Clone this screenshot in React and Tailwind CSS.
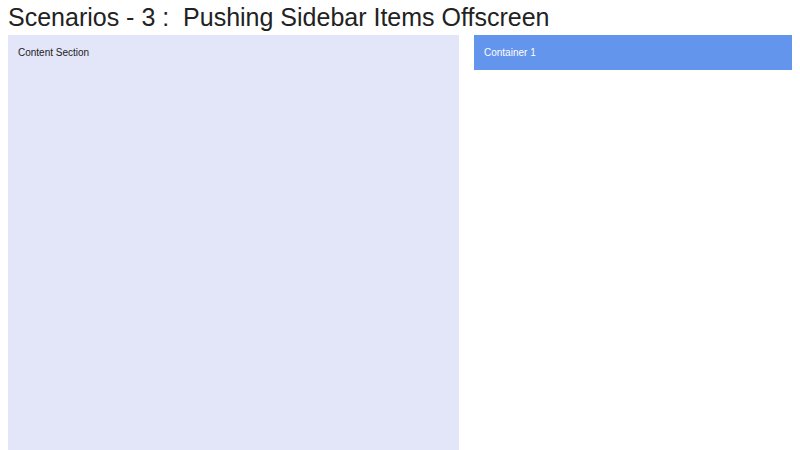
export default function App() {
  return (
    <div className="h-[450px] overflow-hidden bg-white px-2 font-['Liberation_Sans',Arial,sans-serif] text-[#222]">
      <h1 className="text-[25px] leading-[35px]">Scenarios - 3 :&nbsp; Pushing Sidebar Items Offscreen</h1>
      <div className="flex gap-[15px]">
        <section className="h-[500px] w-[451px] shrink-0 bg-[#e3e5f8] px-[10px] pt-[11px] text-[10px] leading-[14px]">
          Content Section
        </section>
        <aside className="flex-1">
          <div className="h-[35px] bg-[#6495ed] px-[10px] pt-[11px] text-[10px] leading-[14px] text-white">
            Container 1
          </div>
        </aside>
      </div>
    </div>
  );
}
